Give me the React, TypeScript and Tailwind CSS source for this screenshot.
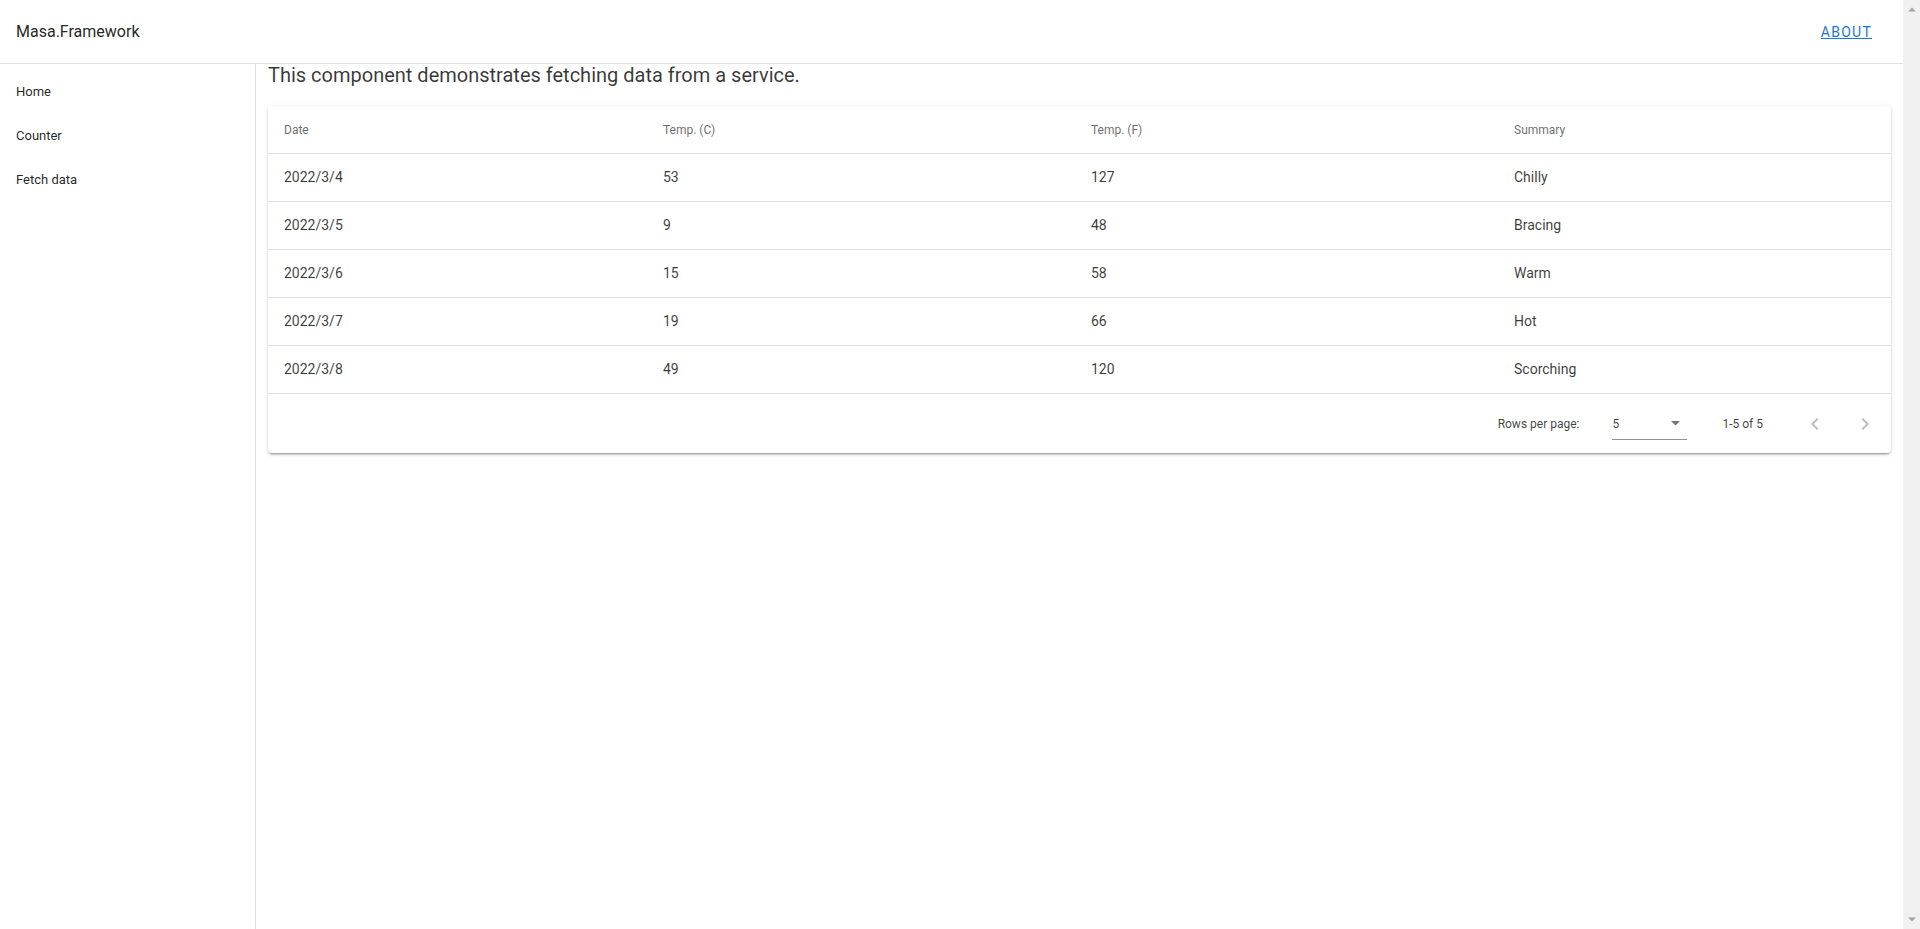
import React from "react";

const rows: [string, string, string, string][] = [
  ["2022/3/4", "53", "127", "Chilly"],
  ["2022/3/5", "9", "48", "Bracing"],
  ["2022/3/6", "15", "58", "Warm"],
  ["2022/3/7", "19", "66", "Hot"],
  ["2022/3/8", "49", "120", "Scorching"],
];

const cols = "grid grid-cols-[379px_428px_423px_1fr]";

function ChevronLeft() {
  return (
    <svg width="24" height="24" viewBox="0 0 24 24">
      <path d="M15.41,16.58L10.83,12L15.41,7.41L14,6L8,12L14,18L15.41,16.58Z" fill="rgba(0,0,0,0.26)" />
    </svg>
  );
}

function ChevronRight() {
  return (
    <svg width="24" height="24" viewBox="0 0 24 24">
      <path d="M8.59,16.58L13.17,12L8.59,7.41L10,6L16,12L10,18L8.59,16.58Z" fill="rgba(0,0,0,0.26)" />
    </svg>
  );
}

export default function App() {
  return (
    <div className="flex h-[929px] w-[1920px] overflow-hidden bg-white font-['Roboto',sans-serif] text-[rgba(0,0,0,0.87)]">
      <div className="flex min-w-0 flex-1 flex-col">
        <header className="flex h-16 shrink-0 items-center justify-between border-b border-[#e0e0e0] pl-4 pr-[31px]">
          <div className="text-[16px] leading-6">Masa.Framework</div>
          <a className="cursor-pointer text-[14px] leading-6 tracking-[1.25px] text-[#1976d2] underline">ABOUT</a>
        </header>
        <div className="flex min-h-0 flex-1">
          <nav className="w-64 shrink-0 border-r border-[#e0e0e0] pt-[6px]">
            {["Home", "Counter", "Fetch data"].map((t) => (
              <div key={t} className="flex h-[43.75px] items-center pl-4 text-[13px]">
                {t}
              </div>
            ))}
          </nav>
          <main className="min-w-0 flex-1 px-3">
            <p className="mb-5 text-[20px] leading-[22px] text-[rgba(0,0,0,0.78)]">
              This component demonstrates fetching data from a service.
            </p>
            <div className="rounded-[4px] bg-white shadow-[0_3px_1px_-2px_rgba(0,0,0,0.2),0_2px_2px_0_rgba(0,0,0,0.14),0_1px_5px_0_rgba(0,0,0,0.12)]">
              <div className={`${cols} h-12 items-center border-b border-[rgba(0,0,0,0.12)] text-[12px] text-[rgba(0,0,0,0.6)]`}>
                <div className="px-4">Date</div>
                <div className="px-4">Temp. (C)</div>
                <div className="px-4">Temp. (F)</div>
                <div className="px-4">Summary</div>
              </div>
              {rows.map((r) => (
                <div key={r[0]} className={`${cols} h-12 items-center border-b border-[rgba(0,0,0,0.12)] text-[14px] text-[rgba(0,0,0,0.78)]`}>
                  {r.map((c, i) => (
                    <div key={i} className="px-4">
                      {c}
                    </div>
                  ))}
                </div>
              ))}
              <div className="flex h-[59px] items-center justify-end pr-2 text-[12px] text-[rgba(0,0,0,0.75)]">
                <div>Rows per page:</div>
                <div className="ml-[33px] flex h-8 w-[75px] items-center justify-between border-b border-[rgba(0,0,0,0.42)]">
                  <span className="pt-[1px]">5</span>
                  <svg width="9" height="5" viewBox="0 0 9 5" className="mr-[7px]">
                    <path d="M0,0 L4.5,4.5 L9,0 Z" fill="rgba(0,0,0,0.54)" />
                  </svg>
                </div>
                <div className="ml-[35px] mr-[34px]">1-5 of 5</div>
                <div className="flex h-9 w-9 items-center justify-center">
                  <ChevronLeft />
                </div>
                <div className="ml-[14px] flex h-9 w-9 items-center justify-center">
                  <ChevronRight />
                </div>
              </div>
            </div>
          </main>
        </div>
      </div>
      <div className="flex w-[17px] shrink-0 flex-col items-center justify-between bg-[#f1f1f1] py-[6px]">
        <svg width="8" height="5" viewBox="0 0 8 5" className="mt-[1px]">
          <path d="M0,4.5 L4,0.5 L8,4.5 Z" fill="#a3a3a3" />
        </svg>
        <svg width="8" height="5" viewBox="0 0 8 5" className="mb-[1px]">
          <path d="M0,0.5 L4,4.5 L8,0.5 Z" fill="#a3a3a3" />
        </svg>
      </div>
    </div>
  );
}
